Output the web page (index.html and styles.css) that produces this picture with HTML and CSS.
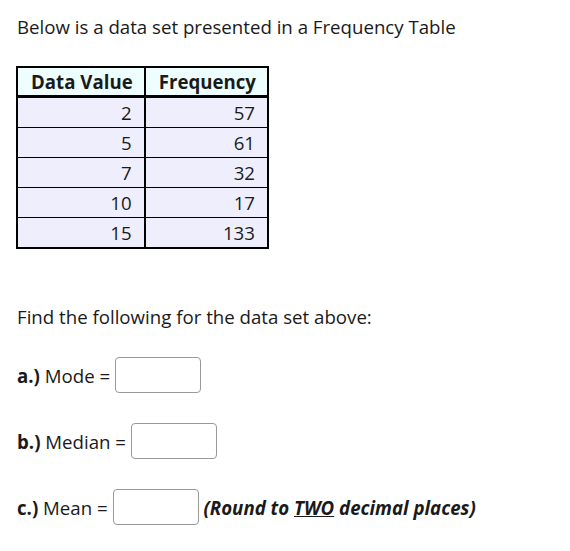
FILE: index.html
```html
<!DOCTYPE html>
<html>
<head>
<meta charset="utf-8">
<link rel="stylesheet" href="styles.css">
</head>
<body>
<div class="page">
  <p class="intro">Below is a data set presented in a Frequency Table</p>
  <table class="freq">
    <thead>
      <tr><th class="c1">Data Value</th><th class="c2">Frequency</th></tr>
    </thead>
    <tbody>
      <tr><td class="c1">2</td><td class="c2">57</td></tr>
      <tr><td class="c1">5</td><td class="c2">61</td></tr>
      <tr><td class="c1">7</td><td class="c2">32</td></tr>
      <tr><td class="c1">10</td><td class="c2">17</td></tr>
      <tr><td class="c1">15</td><td class="c2">133</td></tr>
    </tbody>
  </table>
  <p class="find">Find the following for the data set above:</p>
  <div class="q q-a"><b>a.)</b>&nbsp;Mode =&nbsp;<span class="box"></span></div>
  <div class="q q-b"><b>b.)</b>&nbsp;Median =&nbsp;<span class="box"></span></div>
  <div class="q q-c"><b>c.)</b>&nbsp;Mean =&nbsp;<span class="box"></span><span class="note">(Round to <u>TWO</u> decimal places)</span></div>
</div>
</body>
</html>
```
FILE: styles.css
```css
html, body { margin: 0; padding: 0; background: #fff; }
body { font-family: "Open Sans", sans-serif; color: #1a1a1a; font-size: 18.67px; }
.page { padding: 13px 0 0 17px; }
.intro { margin: 0; line-height: 28px; }
.freq {
  border-collapse: collapse;
  margin-top: 25px;
  margin-left: -1px;
  border: 2px solid #000;
  font-size: 18.67px;
}
.freq th {
  background: #eefefe;
  font-weight: bold;
  height: 27px;
  padding: 0 11px 0 13px;
  border-bottom: 3px solid #000;
  text-align: center;
  line-height: 26px;
}
.freq td {
  background: #eeeefc;
  text-align: right;
  height: 29px;
  padding: 0 12px 0 0;
  border-bottom: 1px solid #000;
  line-height: 26px;
}
.freq .c1 { border-right: 2px solid #000; }
.find { margin: 54px 0 0 0; line-height: 28px; }
.q { display: flex; align-items: center; height: 36px; }
.q-a { margin-top: 26px; }
.q-b { margin-top: 30px; }
.q-c { margin-top: 30px; }
.box {
  display: inline-block;
  width: 84px; height: 34px;
  border: 1px solid #999;
  border-radius: 4px;
  background: #fff;
}
.note { font-weight: bold; font-style: italic; margin-left: 5px; }
```
